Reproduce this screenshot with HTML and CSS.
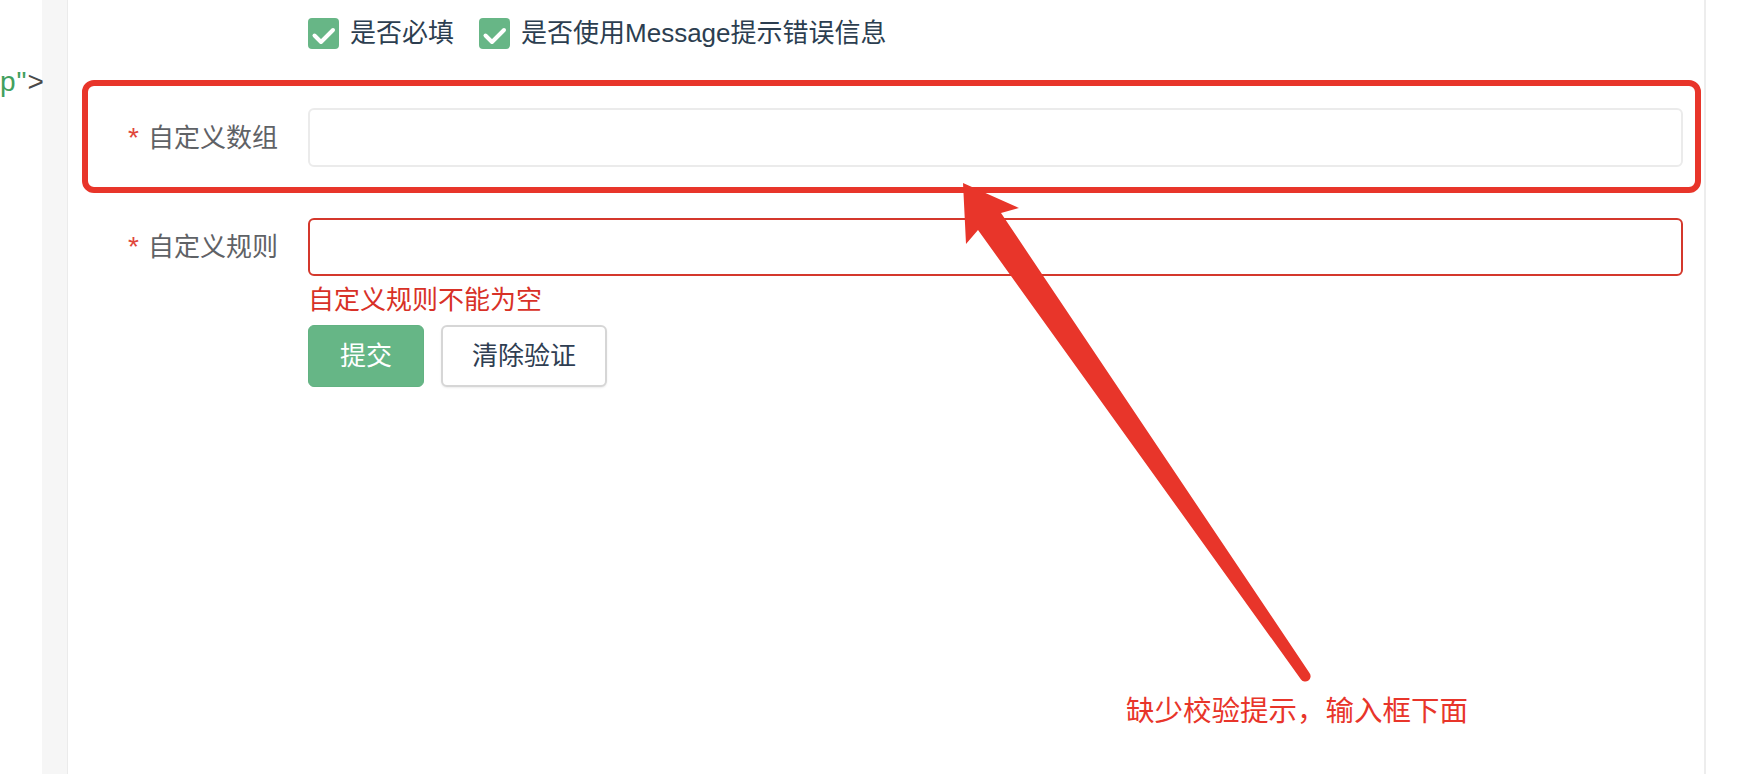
FILE: index.html
```html
<!DOCTYPE html>
<html lang="zh-CN">
<head>
<meta charset="utf-8">
<title>表单验证</title>
<link rel="stylesheet" href="styles.css">
</head>
<body>
<div class="page">
  <div class="code"><span class="code-green">p<span class="code-quote">&quot;</span></span><span class="code-dark">&gt;</span></div>
  <div class="strip"></div>
  <div class="panel">
    <div class="checks">
      <label class="cb">
        <span class="cb-box"><svg viewBox="0 0 31 31" width="31" height="31"><rect width="31" height="31" rx="4" fill="#67b686"/><path d="M6.5 17.5 L13 24 L25 12" fill="none" stroke="#fff" stroke-width="4" stroke-linecap="round" stroke-linejoin="round"/></svg></span>
        <span class="cb-text">是否必填</span>
      </label>
      <label class="cb">
        <span class="cb-box"><svg viewBox="0 0 31 31" width="31" height="31"><rect width="31" height="31" rx="4" fill="#67b686"/><path d="M6.5 17.5 L13 24 L25 12" fill="none" stroke="#fff" stroke-width="4" stroke-linecap="round" stroke-linejoin="round"/></svg></span>
        <span class="cb-text">是否使用Message提示错误信息</span>
      </label>
    </div>

    <div class="item item-first">
      <div class="label"><span class="req">*</span>自定义数组</div>
      <div class="control"><div class="input"></div></div>
    </div>

    <div class="item item-second">
      <div class="label label-tall"><span class="req">*</span>自定义规则</div>
      <div class="control">
        <div class="input input-error"></div>
        <div class="error">自定义规则不能为空</div>
        <div class="actions">
          <button class="btn btn-primary">提交</button>
          <button class="btn btn-default">清除验证</button>
        </div>
      </div>
    </div>
  </div>
  <div class="rest"></div>

  <div class="mark-box"></div>
  <svg class="arrow" viewBox="0 0 1744 774" width="1744" height="774">
    <path d="M963 183 L1019 208 L1001 213 L1309.5 673 A5 5 0 0 1 1301 679.5 L978 230 L966 244 Z" fill="#e8352a"/>
  </svg>
  <div class="note">缺少校验提示，输入框下面</div>
</div>
</body>
</html>
```

FILE: styles.css
```css
* {
  box-sizing: border-box;
}

html, body {
  margin: 0;
  padding: 0;
  background: #ffffff;
}

body {
  font-family: "Liberation Sans", "Noto Sans CJK SC", sans-serif;
  color: #2c3e50;
}

.page {
  position: relative;
  display: flex;
  width: 1744px;
  height: 774px;
  overflow: hidden;
}

.code {
  position: relative;
  z-index: 1;
  flex: 0 0 42px;
  width: 42px;
  padding-top: 68px;
  font-size: 28px;
  line-height: 28px;
  white-space: nowrap;
  overflow: visible;
}

.code-green {
  color: #42a05e;
}

.code-quote {
  margin: 0 1px 0 1px;
}

.code-dark {
  color: #4a4a4a;
}

.strip {
  flex: 0 0 25px;
  background: #f6f6f6;
}

.panel {
  flex: 0 0 1639px;
  border-left: 1px solid #ebebeb;
  border-right: 2px solid #ededed;
  padding: 18px 21px 0 0;
}

.rest {
  flex: 1;
}

.checks {
  display: flex;
  align-items: center;
  height: 31px;
  padding-left: 240px;
}

.cb {
  display: flex;
  align-items: center;
  margin-right: 25px;
}

.cb-box {
  display: block;
  width: 31px;
  height: 31px;
}

.cb-box svg {
  display: block;
}

.cb-text {
  margin-left: 11px;
  font-size: 26px;
  line-height: 31px;
  color: #2c3e50;
}

.item {
  display: flex;
  align-items: flex-start;
}

.item-first {
  margin-top: 59px;
}

.item-second {
  margin-top: 50px;
}

.label {
  flex: 0 0 240px;
  padding-right: 30px;
  text-align: right;
  font-size: 26px;
  line-height: 59px;
  color: #5f6266;
  white-space: nowrap;
}

.label-tall {
  line-height: 58px;
}

.req {
  color: #e0463b;
  font-size: 28px;
  margin-right: 9px;
}

.control {
  flex: 1;
}

.input {
  height: 59px;
  border: 2px solid #ebebeb;
  border-radius: 6px;
  background: #fff;
}

.input-error {
  height: 58px;
  border-color: #d4382c;
}

.error {
  margin-top: 9px;
  font-size: 26px;
  line-height: 30px;
  color: #d83127;
}

.actions {
  display: flex;
  gap: 17px;
  margin-top: 10px;
}

.btn {
  height: 62px;
  border-radius: 6px;
  font-family: "Liberation Sans", "Noto Sans CJK SC", sans-serif;
  font-size: 26px;
  line-height: 1;
  padding: 0;
  cursor: pointer;
}

.btn-primary {
  width: 116px;
  background: #66b686;
  border: 1px solid #62b282;
  color: #ffffff;
}

.btn-default {
  width: 166px;
  background: #ffffff;
  border: 2px solid #d6d6d6;
  color: #2f3e52;
  box-shadow: 0 1px 2px rgba(0, 0, 0, 0.08);
}

.mark-box {
  position: absolute;
  left: 82px;
  top: 80px;
  width: 1619px;
  height: 113px;
  border: 6px solid #e8352a;
  border-radius: 12px;
  pointer-events: none;
}

.arrow {
  position: absolute;
  left: 0;
  top: 0;
  pointer-events: none;
}

.note {
  position: absolute;
  left: 1126px;
  top: 694px;
  font-family: "Noto Sans CJK SC", sans-serif;
  font-size: 28.5px;
  line-height: 30px;
  color: #e8352a;
  white-space: nowrap;
}
```
